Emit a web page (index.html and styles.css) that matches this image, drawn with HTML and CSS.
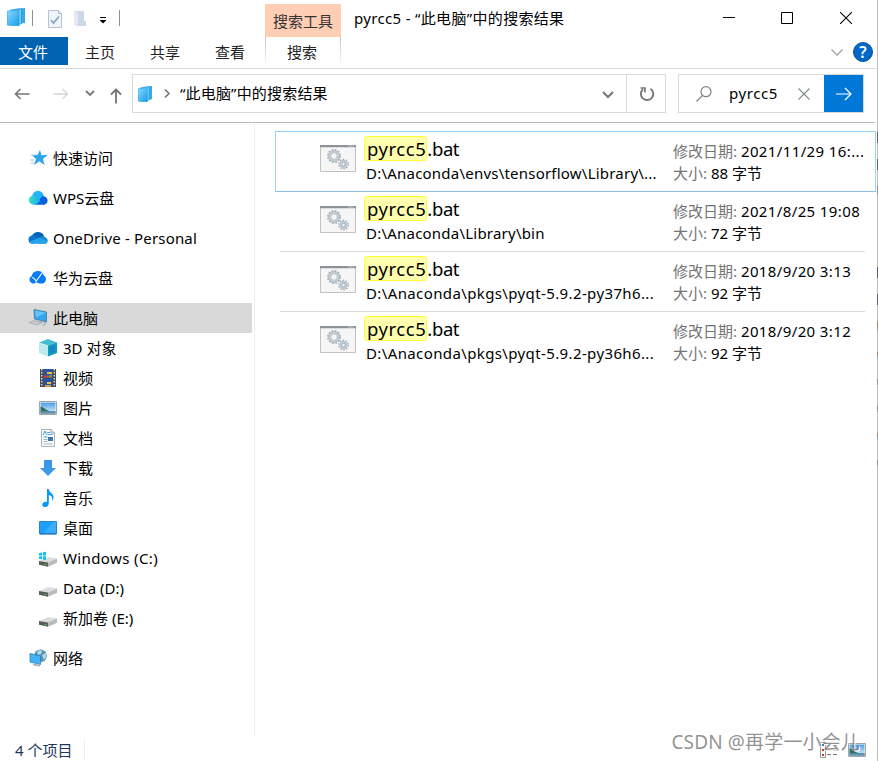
FILE: index.html
```html
<!DOCTYPE html>
<html lang="zh-CN">
<head>
  <meta charset="UTF-8">
  <title>pyrcc5 - “此电脑”中的搜索结果</title>
  <meta name="viewport" content="width=device-width, initial-scale=1.0">
  <link rel="stylesheet" href="styles.css">
</head>
<body>
  <!-- shared icons -->
  <svg class="defs" width="0" height="0">
    <defs>
      <linearGradient id="blue" x1="0" y1="0" x2="1" y2="1">
        <stop offset="0" stop-color="#8fdcff"/><stop offset="1" stop-color="#169bea"/>
      </linearGradient>
      <linearGradient id="sky" x1="0" y1="0" x2="0" y2="1">
        <stop offset="0" stop-color="#4c9be5"/><stop offset="1" stop-color="#e3f2fa"/>
      </linearGradient>
      <symbol id="i-results" viewBox="0 0 18 18">
        <path d="M7 1l11-1v15l-11 1z" fill="#35a9ec"/>
        <path d="M3.500 2l11-1.200v15l-11 1.200z" fill="#78ccfa" stroke="#2196dd" stroke-width=".8"/>
        <path d="M0 3.200l12-1.200v16l-12-1z" fill="url(#blue)" stroke="#2ba2e9" stroke-width=".7"/>
      </symbol>
      <symbol id="i-bat" viewBox="0 0 36 28">
        <path d="M.5 1.500h35v26h-35z" fill="#f6f6f6" stroke="#bfc1c3"/>
        <path d="M0 1h36v2.200h-36z" fill="#8b9298"/>
        <path d="M28 2h6" stroke="#d3d7da" stroke-width="1" stroke-dasharray="1.500 .8"/>
        <circle cx="14" cy="12" r="6.300" fill="none" stroke="#a0adb7" stroke-width="1.400" stroke-dasharray="1.700 1.600"/>
        <circle cx="14" cy="12" r="4.600" fill="#f5f6f7" stroke="#c2ced6" stroke-width="2.200"/>
        <circle cx="14" cy="12" r="5.700" fill="none" stroke="#94a3ae" stroke-width=".5"/>
        <circle cx="14" cy="12" r="3.300" fill="#f5f5f5" stroke="#8f9da7" stroke-width=".6"/>
        <circle cx="23.500" cy="20" r="4.700" fill="none" stroke="#96a4af" stroke-width="1.300" stroke-dasharray="1.500 1.450"/>
        <circle cx="23.500" cy="20" r="3.200" fill="#f4f4f4" stroke="#bdc9d2" stroke-width="2"/>
        <circle cx="23.500" cy="20" r="1.800" fill="#f4f4f4" stroke="#84939e" stroke-width=".7"/>
      </symbol>
      <symbol id="i-drive" viewBox="0 0 18 18">
        <path d="M0 12l9-4 9 1.500-9 4z" fill="#dddddf"/>
        <path d="M0 12l9 1.600v4.100l-9-2z" fill="#555b56"/>
        <path d="M9 13.600l9-4.100v4.200l-9 4z" fill="#b9babc"/>
        <path d="M5.500 15.200l2 .4" stroke="#5fd45f" stroke-width="1"/>
      </symbol>
      <symbol id="i-picture" viewBox="0 0 18 14">
        <path d="M.5 .5h17v13h-17z" fill="#fff" stroke="#a0a5a9"/>
        <path d="M1.500 1.500h15v11h-15z" fill="url(#sky)"/>
        <path d="M1.500 5.500c3 .5 5 3.500 9 4.500l6 .4v2.100h-15z" fill="#356f60"/>
        <path d="M1.500 10.500l15-.6v2.600h-15z" fill="#6393b5"/>
      </symbol>
    </defs>
  </svg>

  <div class="window">
    <header class="top">
      <div class="top-left">
        <div class="quick">
          <svg class="quick-app" width="18" height="18"><use href="#i-results"/></svg>
          <span class="sep"></span>
          <svg class="quick-check" width="14" height="18" viewBox="0 0 14 18"><path d="M.5 .5h10l3 3v14h-13z" fill="#f0f4fb" stroke="#b4c0d5"/><path d="M10.500 .5v3h3" fill="none" stroke="#b4c0d5"/><path d="M3 10l2.500 3 5.500-6.500" fill="none" stroke="#8ea5cc" stroke-width="1.800"/></svg>
          <svg class="quick-folder" width="12" height="16" viewBox="0 0 12 16"><path d="M0 0h9l1 1v9h2v5h-8z" fill="#ccd8ea"/><path d="M0 0l4 2v14l-4-2z" fill="#e3eaf5"/></svg>
          <svg class="quick-more" width="8" height="7" viewBox="0 0 8 7"><path d="M1 .5h6" stroke="#000"/><path d="M.5 3h7l-3.500 3.500z"/></svg>
          <span class="sep"></span>
        </div>
        <nav class="tabs">
          <span class="tab tab-file">文件</span>
          <span class="tab">主页</span>
          <span class="tab">共享</span>
          <span class="tab">查看</span>
        </nav>
      </div>
      <div class="context">
        <div class="context-title">搜索工具</div>
        <div class="context-tab">搜索</div>
      </div>
      <h1 class="title">pyrcc5 - “此电脑”中的搜索结果</h1>
      <div class="top-right">
        <div class="controls">
          <svg width="12" height="12" viewBox="0 0 12 12"><path d="M0 5.500h12" stroke="#000"/></svg>
          <svg width="12" height="12" viewBox="0 0 12 12"><path d="M.5 .5h11v11h-11z" fill="none" stroke="#000"/></svg>
          <svg width="12" height="12" viewBox="0 0 12 12"><path d="M0 0l12 12M12 0L0 12" stroke="#000" stroke-width="1.100"/></svg>
        </div>
        <div class="help">
          <svg width="12" height="7" viewBox="0 0 12 7"><path d="M.5 .5l5.500 5.500 5.500-5.500" fill="none" stroke="#a0a0a0" stroke-width="1.300"/></svg>
          <span class="help-btn">?</span>
        </div>
      </div>
    </header>

    <div class="navbar">
      <div class="arrows">
        <svg width="16" height="12" viewBox="0 0 16 12"><path d="M15.500 6H1.500M6.500 1l-5 5 5 5" fill="none" stroke="#757575" stroke-width="1.600"/></svg>
        <svg width="16" height="12" viewBox="0 0 16 12"><path d="M.5 6h14M9.500 1l5 5-5 5" fill="none" stroke="#d6d6d6" stroke-width="1.400"/></svg>
        <svg width="10" height="7" viewBox="0 0 10 7"><path d="M1 1l4 4 4-4" fill="none" stroke="#777" stroke-width="1.800"/></svg>
        <svg width="12" height="16" viewBox="0 0 12 16"><path d="M6 15.500V1.500M1 6.500l5-5 5 5" fill="none" stroke="#757575" stroke-width="1.800"/></svg>
      </div>
      <div class="address">
        <svg class="address-icon" width="14" height="16" viewBox="0 0 18 18" preserveAspectRatio="none"><use href="#i-results"/></svg>
        <svg class="address-chev" width="6" height="9" viewBox="0 0 6 9"><path d="M1 .5l4 4-4 4" fill="none" stroke="#6f6f6f" stroke-width="1.500"/></svg>
        <span class="address-text">“此电脑”中的搜索结果</span>
        <svg class="address-drop" width="12" height="8" viewBox="0 0 12 8"><path d="M1 1l5 5 5-5" fill="none" stroke="#777" stroke-width="2"/></svg>
        <span class="refresh"><svg width="16" height="16" viewBox="0 0 16 16"><path d="M11.500 2.700A6.200 6.200 0 1 1 4 3.200" fill="none" stroke="#777" stroke-width="1.900"/><path d="M1.500 2h4.500v4.500" fill="none" stroke="#777" stroke-width="1.700"/></svg></span>
      </div>
      <div class="search">
        <svg class="search-glass" width="16" height="16" viewBox="0 0 16 16"><circle cx="10" cy="5.700" r="5" fill="none" stroke="#808080" stroke-width="1.200"/><path d="M6.500 9.300L.5 15.500" stroke="#808080" stroke-width="1.200"/></svg>
        <span class="search-text">pyrcc5</span>
        <svg class="search-clear" width="12" height="12" viewBox="0 0 12 12"><path d="M.5 .5l11 11M11.500 .5l-11 11" stroke="#7e8d89" stroke-width="1.100"/></svg>
        <span class="search-go"><svg width="16" height="14" viewBox="0 0 16 14"><path d="M0 7h15M9 1l6 6-6 6" fill="none" stroke="#fff" stroke-width="1.200"/></svg></span>
      </div>
    </div>

    <div class="main">
      <aside class="sidebar">
        <div class="node root">
          <svg width="20" height="18" viewBox="0 0 20 18"><path d="M12 1l1.500 5.200 6.500-.4-5 4 1.500 6.200-5.200-3.700-5.300 3.700 2-6-4-3.800 5.500-.1z" fill="#2da4ee"/><path d="M3 6h5M2 11h4M3 14h4" stroke="#8dcef6" stroke-width="1.200"/></svg>
          <span>快速访问</span>
        </div>
        <div class="node root">
          <svg width="20" height="18" viewBox="0 0 20 18"><defs><linearGradient id="wps"><stop stop-color="#35e1c4"/><stop offset="1" stop-color="#18a9f7"/></linearGradient></defs><circle cx="10" cy="7.500" r="5.800" fill="#23b2fb"/><path d="M7 15.800l7-8.300a4.300 4.300 0 1 1 .5 8.300z" fill="#0960e1"/><path d="M5.200 15.800a4.700 4.700 0 1 1 3.500-8.200c2 1.400 2.500 2.600 3.500 3.700-1.500 2.500-3.500 4.500-7 4.500z" fill="url(#wps)"/></svg>
          <span>WPS云盘</span>
        </div>
        <div class="node root">
          <svg width="20" height="18" viewBox="0 0 20 18"><path d="M4 7a6.500 6.500 0 0 1 12 0l-4 5z" fill="#0564b8"/><path d="M5 14.800a4.300 4.300 0 0 1-.5-8.600c2-.2 4 .8 6 2.400l-4 6.200z" fill="#0f74ce"/><path d="M11 9.500c2-3 5.500-2.800 6.500-1 3 1 3 5-.5 6.300h-8z" fill="#168ada"/><path d="M1 13l10-4.200 8.500 3.800c-.5 1.600-1.500 2.200-3 2.200h-12c-1.800 0-2.800-.6-3.500-1.800z" fill="#28a3eb"/></svg>
          <span class="onedrive">OneDrive - Personal</span>
        </div>
        <div class="node root">
          <svg width="20" height="18" viewBox="0 0 20 18"><path d="M4.500 14.500a4 4 0 0 1-.8-7.500 6.200 6.200 0 0 1 12-.8 4.600 4.600 0 0 1-.7 8.300h-4l-2.500-1.200c-1 .8-2.500 1.200-4 1.200z" fill="#087bf7"/><path d="M14.500 3.500l-7 9.500M4 8.500c1.500 0 2.500 1 4 3" fill="none" stroke="#fff" stroke-width="1.100"/></svg>
          <span>华为云盘</span>
        </div>
        <div class="node root selected">
          <svg width="20" height="18" viewBox="0 0 20 18"><path d="M6 .5l12.500 2.500v10l-12-3z" fill="#32a5ee" stroke="#477493" stroke-width=".8"/><path d="M7 1.500l11 2.200-10 4.800z" fill="#63c6fa"/><path d="M1 13.500l5-2 8 2-5 2.500z" fill="#c5cbd0" stroke="#92999e" stroke-width=".6"/><path d="M10 11.500l5 1.200 3 2-4 1.800" fill="none" stroke="#a4aaae"/></svg>
          <span>此电脑</span>
        </div>
        <div class="node">
          <svg width="18" height="18" viewBox="0 0 18 18"><path d="M0 3.500l9-3.500 9 3.500-9 3z" fill="#43bed0"/><path d="M0 3.500l9 3v11l-9-3.500z" fill="#bcebee"/><path d="M9 6.500l9-3v10.500l-9 3.500z" fill="#109abd"/><path d="M11 7.500l5-1.500v6.500l-5 1.800z" fill="#1688c5"/></svg>
          <span>3D 对象</span>
        </div>
        <div class="node">
          <svg width="18" height="18" viewBox="0 0 18 18"><path d="M1 0h16v18h-16z" fill="#4c4c4d"/><path d="M4.500 0h9v8.500h-9zM4.500 9.500h9v8.500h-9z" fill="#2754a7"/><path d="M2.700 0v18M15.300 0v18" stroke="#e4e4e4" stroke-width="1.300" stroke-dasharray="1.500 1.500"/><path d="M8 3h5v2h-5zM8 13h4v2h-4z" fill="#f1c32b"/><path d="M5 6.500h6v2h-6z" fill="#da3e3d"/><path d="M10 6h3v2.500h-3z" fill="#62a746"/><path d="M6 16h6v2h-6z" fill="#e09730"/></svg>
          <span>视频</span>
        </div>
        <div class="node">
          <svg width="18" height="14"><use href="#i-picture"/></svg>
          <span>图片</span>
        </div>
        <div class="node">
          <svg width="18" height="18" viewBox="0 0 18 18"><path d="M2.500 .5h9.500l3.500 3.500v13.500h-13z" fill="#fafafa" stroke="#aeb3b6"/><path d="M12 .5v3.500h3.500" fill="none" stroke="#9a9fa3"/><path d="M4 6l2-4 1.500 4M8 3.500h3M8.500 5.500h5M4.500 8h4" fill="none" stroke="#45a4d9"/><path d="M4.500 10.500h4M4.500 12.500h4M4.500 15h9" stroke="#9db7c8"/><path d="M9 8h5v4h-5z" fill="#3b79a9"/></svg>
          <span>文档</span>
        </div>
        <div class="node">
          <svg width="18" height="18" viewBox="0 0 18 18"><path d="M5 1h8v8h4l-8 8-8-8h4z" fill="#3c97e8"/></svg>
          <span>下载</span>
        </div>
        <div class="node">
          <svg width="18" height="18" viewBox="0 0 18 18"><path d="M8 0h1.800c.2 4 5 4 4.800 8.500-.1 1.500-.9 2.500-1.700 3.500 1-4-.5-5.200-3.100-6v8.200c0 5.300-7 4.800-6.500 1.200.3-2.200 2.700-3.100 4.700-2.400z" fill="#0897fb"/></svg>
          <span>音乐</span>
        </div>
        <div class="node">
          <svg width="18" height="14" viewBox="0 0 18 14"><path d="M.5 .5h17v12.500h-17z" fill="#1c9fff" stroke="#2588d0"/><path d="M4 12.500l10-11.500h3v11.500z" fill="#39adff"/><path d="M1 12.800h16" stroke="#176daf"/></svg>
          <span>桌面</span>
        </div>
        <div class="node">
          <svg width="18" height="18" viewBox="0 0 18 18"><use href="#i-drive"/><path d="M0 4l3-.5v3h-3zM3.800 3.300l3.200-.5v3.700h-3.200zM0 7.300h3v3l-3-.5zM3.800 7.300h3.200v3.600l-3.200-.5z" fill="#13bff2"/></svg>
          <span class="drive">Windows (C:)</span>
        </div>
        <div class="node">
          <svg width="18" height="18"><use href="#i-drive"/></svg>
          <span>Data (D:)</span>
        </div>
        <div class="node">
          <svg width="18" height="18"><use href="#i-drive"/></svg>
          <span>新加卷 (E:)</span>
        </div>
        <div class="node root">
          <svg width="20" height="18" viewBox="0 0 20 18"><circle cx="12.500" cy="6.800" r="6.300" fill="#5594b5"/><path d="M9 3c2-2 4-2 5-1l-1 3-3 1zM14 6l4-2v4l-2 3z" fill="#b2d8e3"/><path d="M2 4.500l10.500 2.500v8.500l-10.500-2.500z" fill="#45b2f5" stroke="#287fb9" stroke-width=".8"/><path d="M5 15.500l7 1.500M8 14.500v2" stroke="#aab4bb" stroke-width="1.400"/></svg>
          <span>网络</span>
        </div>
      </aside>

      <section class="results">
        <div class="file active">
          <svg class="file-icon" width="36" height="28"><use href="#i-bat"/></svg>
          <div class="file-main">
            <div class="file-name"><mark>pyrcc5</mark>.bat</div>
            <div class="file-path">D:\Anaconda\envs\tensorflow\Library\...</div>
          </div>
          <div class="file-meta">
            <div><em>修改日期:</em> <span class="date">2021/11/29 16:...</span></div>
            <div><em>大小:</em> 88 字节</div>
          </div>
        </div>
        <div class="file">
          <svg class="file-icon" width="36" height="28"><use href="#i-bat"/></svg>
          <div class="file-main">
            <div class="file-name"><mark>pyrcc5</mark>.bat</div>
            <div class="file-path">D:\Anaconda\Library\bin</div>
          </div>
          <div class="file-meta">
            <div><em>修改日期:</em> <span class="date">2021/8/25 19:08</span></div>
            <div><em>大小:</em> 72 字节</div>
          </div>
        </div>
        <div class="file">
          <svg class="file-icon" width="36" height="28"><use href="#i-bat"/></svg>
          <div class="file-main">
            <div class="file-name"><mark>pyrcc5</mark>.bat</div>
            <div class="file-path wide">D:\Anaconda\pkgs\pyqt-5.9.2-py37h6...</div>
          </div>
          <div class="file-meta">
            <div><em>修改日期:</em> <span class="date">2018/9/20 3:13</span></div>
            <div><em>大小:</em> 92 字节</div>
          </div>
        </div>
        <div class="file">
          <svg class="file-icon" width="36" height="28"><use href="#i-bat"/></svg>
          <div class="file-main">
            <div class="file-name"><mark>pyrcc5</mark>.bat</div>
            <div class="file-path wide">D:\Anaconda\pkgs\pyqt-5.9.2-py36h6...</div>
          </div>
          <div class="file-meta">
            <div><em>修改日期:</em> <span class="date">2018/9/20 3:12</span></div>
            <div><em>大小:</em> 92 字节</div>
          </div>
        </div>
      </section>
    </div>

    <footer class="status">
      <span class="count">4 个项目</span>
      <div class="views">
        <svg width="18" height="16" viewBox="0 0 18 16"><path d="M.5 .5h5v15h-5z" fill="#fff" stroke="#9a9a9a"/><path d="M2 2h2v2h-2z" fill="#3a7ab9"/><path d="M2 7h2v2h-2zM2 12h2v2h-2z" fill="#c43a2c"/><path d="M7 3h4M13 3h4M7 8h4M13 8h4M7 12.500h4M13 12.500h4" stroke="#777"/></svg>
        <svg width="18" height="14"><use href="#i-picture"/></svg>
      </div>
    </footer>
    <div class="watermark">CSDN @再学一小会儿</div>
    <div class="edge"></div>
  </div>
</body>
</html>
```
FILE: styles.css
```css
* { box-sizing: border-box; }
body { margin: 0; background: #fff; color: #000; font: 15px/20px "Noto Sans", "Noto Sans CJK SC", sans-serif; overflow: hidden; }
svg { display: block; flex: none; }
.defs { position: absolute; }
.window { position: relative; width: 878px; height: 761px; display: flex; flex-direction: column; border-right: 1px solid #bcbcbc; white-space: nowrap; }

/* title bar and ribbon tabs */
.top { display: flex; height: 69px; border-bottom: 1px solid #d9d9d9; margin-right: 1px; }
.top-left { width: 265px; }
.quick { display: flex; align-items: center; height: 37px; padding-left: 7px; }
.quick-app { margin-bottom: 4px; }
.sep { width: 1px; height: 16px; background: #8f8f8f; margin: 0 0 1px 7px; }
.quick-check { margin-left: 15px; }
.quick-folder { margin-left: 12px; }
.quick-more { margin: 3px 0 0 13px; }
.quick-more + .sep { margin-left: 12px; }
.tabs { display: flex; }
.tab { width: 65px; height: 28px; line-height: 30px; padding-right: 1px; text-align: center; color: #222; }
.tab-file { width: 68px; padding-right: 2px; background: #0063b1; color: #fff; }
.context { width: 76px; padding-top: 4px; text-align: center; color: #333; }
.context-title { height: 33px; line-height: 34px; background: #ffceb5; }
.context-tab { height: 25px; line-height: 30px; padding-right: 2px; border: solid; border-width: 0 1px; border-image: linear-gradient(#c4c4c4, #f4f4f4) 1; color: #222; }
.title { margin: 0 0 0 13px; font-size: 15px; font-weight: 400; line-height: 36px; height: 37px; letter-spacing: .33px; }
.top-right { margin-left: auto; width: 160px; }
.controls { display: flex; padding: 12px 0 0 7px; height: 41px; gap: 46px; }
.controls svg:last-child { margin-left: 1px; }
.help { display: flex; justify-content: flex-end; align-items: center; gap: 10px; padding-right: 3px; height: 22px; }
.help-btn { width: 20px; height: 20px; border-radius: 50%; border: 1px solid #174f8f; background: #0068c9; color: #fff; font-size: 16px; font-weight: 600; line-height: 18px; text-align: center; }

/* address row */
.navbar { display: flex; height: 54px; padding: 5px 11px 9px 14px; border-bottom: 1px solid #bdbdbd; margin-right: 2px; }
.arrows { display: flex; flex: none; align-items: center; width: 118px; }
.arrows svg:nth-child(2) { margin-left: 23px; }
.arrows svg:nth-child(3) { margin-left: 16px; }
.arrows svg:nth-child(4) { margin: 4px 0 0 15px; }
.address { display: flex; flex: none; align-items: center; width: 534px; height: 39px; border: 1px solid #d9d9d9; }
.address-icon { margin-left: 5px; }
.address-chev { margin-left: 12px; }
.address-text { margin: 0 0 2px 10px; letter-spacing: .18px; }
.address-drop { margin: 2px 12px 0 auto; }
.refresh { width: 39px; height: 37px; padding: 11px 10px 10px 12px; border-left: 1px solid #d9d9d9; }
.search { display: flex; flex: none; align-items: center; width: 186px; height: 39px; margin-left: 12px; border: 1px solid #d9d9d9; }
.search-glass { margin-left: 17px; }
.search-text { width: 69px; margin: 0 0 2px 17px; letter-spacing: .6px; }
.search-go { display: flex; align-items: center; justify-content: center; width: 39px; height: 37px; margin-left: auto; background: #0078d7; }

/* navigation tree */
.main { display: flex; flex: 1; min-height: 0; }
.sidebar { width: 255px; padding: 10px 2px 0 0; border-right: 1px solid #f1f1f1; }
.node { display: flex; align-items: center; gap: 6px; height: 30px; padding-left: 39px; }
.node.root { gap: 5px; margin-top: 10px; padding-left: 28px; }
.selected { background: #d9d9d9; }
.onedrive { letter-spacing: .17px; }
.drive { letter-spacing: .38px; }

/* search results */
.results { flex: 1; padding: 8px 1px 0 20px; }
.file { display: flex; height: 60px; padding-left: 40px; margin: 0 11px 0 5px; border-bottom: 1px solid #dcdcdc; }
.file:last-child { border-bottom: 0; }
.file.active { height: 61px; margin: 0; padding-left: 44px; border: 1px solid #99d1ff; border-bottom-color: #8bbfe9; }
.file-icon { margin-top: 13px; }
.active .file-icon { margin-top: 12px; }
.file-main { width: 309px; margin-left: 8px; }
.file-name { height: 31px; padding-top: 4px; font-size: 18.500px; line-height: 26px; letter-spacing: -.4px; }
.file mark { display: inline-block; height: 25px; line-height: 23px; padding: 0 0 0 2px; border: 1px solid #ffff32; border-radius: 3px; background: #ffffb0; letter-spacing: .55px; }
.file-path { padding-left: 2px; line-height: 20px; letter-spacing: .22px; }
.wide { letter-spacing: .38px; }
.file-meta { padding-top: 8px; line-height: 22px; }
.date { letter-spacing: .38px; }
.file em { font-style: normal; color: #747474; }

/* status bar */
.status { display: flex; align-items: center; justify-content: space-between; height: 25px; padding: 3px 11px 0 15px; }
.count { color: #1e395b; padding-right: 12px; border-right: 1px solid #eee; }
.views { display: flex; align-items: center; gap: 10px; }
.watermark { position: absolute; right: 17px; bottom: 5px; font-size: 19px; line-height: 28px; letter-spacing: .15px; color: rgba(110, 110, 110, .75); text-shadow: 1px 1px 0 #fff; }

/* slivers of the window behind, along the right border */
.edge {
  position: absolute; right: -1px; top: 132px; width: 1px; height: 340px;
  background:
    linear-gradient(#5d5b80, #5d5b80) 0 0 / 1px 11px no-repeat,
    linear-gradient(#5d5b80, #5d5b80) 0 27px / 1px 11px no-repeat,
    linear-gradient(#a08060, #8aa3b0) 0 54px / 1px 9px no-repeat,
    linear-gradient(#5d5b80, #5d5b80) 0 135px / 1px 11px no-repeat,
    linear-gradient(#5d5b80, #5d5b80) 0 162px / 1px 11px no-repeat,
    linear-gradient(#a08060, #8aa3b0) 0 190px / 1px 9px no-repeat,
    linear-gradient(#a08060, #8aa3b0) 0 220px / 1px 6px no-repeat,
    linear-gradient(#a08060, #8aa3b0) 0 247px / 1px 6px no-repeat,
    linear-gradient(#a08060, #8aa3b0) 0 274px / 1px 6px no-repeat,
    linear-gradient(#a08060, #8aa3b0) 0 301px / 1px 6px no-repeat,
    linear-gradient(#a08060, #8aa3b0) 0 328px / 1px 6px no-repeat;
}
```
